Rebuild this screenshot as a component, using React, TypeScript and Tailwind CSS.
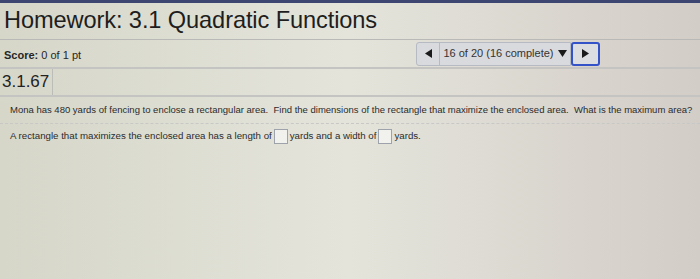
export default function App() {
  return (
    <div
      className="relative h-[279px] w-[700px] overflow-hidden bg-gradient-to-r from-[#d6d7c9] via-[#e4e4db] to-[#d3cdc7] text-[#262626]"
      style={{ fontFamily: '"Liberation Sans", Arial, sans-serif' }}
    >
      <div className="h-[3px] bg-[#3c4670]" />
      <div className="flex h-[37px] items-center border-b border-[#b9bab8] px-[4px]">
        <h1 className="text-[23.6px] leading-none tracking-[-0.1px] text-[#1e1e1e]">
          Homework: 3.1 Quadratic Functions
        </h1>
      </div>
      <div className="flex h-[29px] items-center justify-between border-b-2 border-[#c4c5c3] pl-[4px] pr-[100px]">
        <div className="pt-[4px] text-[11px]">
          <span className="font-bold">Score:</span> 0 of 1 pt
        </div>
        <div className="flex h-[24px] items-stretch">
          <div className="flex items-stretch rounded-l-[3px] border border-[#b6bac2] bg-[#d9dade]">
            <button className="flex w-[23px] items-center justify-center border-r border-[#b6bac2]">
              <svg width="7" height="9" viewBox="0 0 7 9">
                <path d="M7 0 L0 4.5 L7 9 Z" fill="#1a1a1a" />
              </svg>
            </button>
            <div className="flex w-[130px] items-center justify-center gap-[4px] text-[11px] text-[#333]">
              <span>16 of 20 (16 complete)</span>
              <svg width="9" height="7" viewBox="0 0 9 7">
                <path d="M0 0 L9 0 L4.5 7 Z" fill="#1a1a1a" />
              </svg>
            </div>
          </div>
          <button className="flex w-[29px] items-center justify-center rounded-[3px] border-2 border-[#3553c9] bg-[#dcdde1]">
            <svg width="7" height="9" viewBox="0 0 7 9">
              <path d="M0 0 L7 4.5 L0 9 Z" fill="#1a1a1a" />
            </svg>
          </button>
        </div>
      </div>
      <div className="flex h-[28px] border-b-2 border-[#c4c5c3]">
        <div className="flex w-[53px] items-center border-r border-[#bcbcb8] pl-[2px] text-[17px] text-[#222]">
          3.1.67
        </div>
      </div>
      <div className="whitespace-nowrap border-b border-dashed border-[#c8c9c6] pb-[6px] pl-[10px] pt-[6px] text-[9.5px] text-[#2b2b2b]">
        Mona has 480 yards of fencing to enclose a rectangular area.&nbsp; Find the dimensions of the rectangle that maximize the enclosed area.&nbsp; What is the maximum area?
      </div>
      <div className="flex items-center whitespace-nowrap px-[10px] pt-[5px] text-[9.7px] text-[#2b2b2b]">
        <span>A rectangle that maximizes the enclosed area has a length of</span>
        <span className="mx-[2px] inline-block h-[15px] w-[14px] border border-[#9ea2aa] bg-[#f1f1ee]" />
        <span>yards and a width of</span>
        <span className="mx-[2px] inline-block h-[15px] w-[14px] border border-[#9ea2aa] bg-[#f1f1ee]" />
        <span>yards.</span>
      </div>
    </div>
  );
}
